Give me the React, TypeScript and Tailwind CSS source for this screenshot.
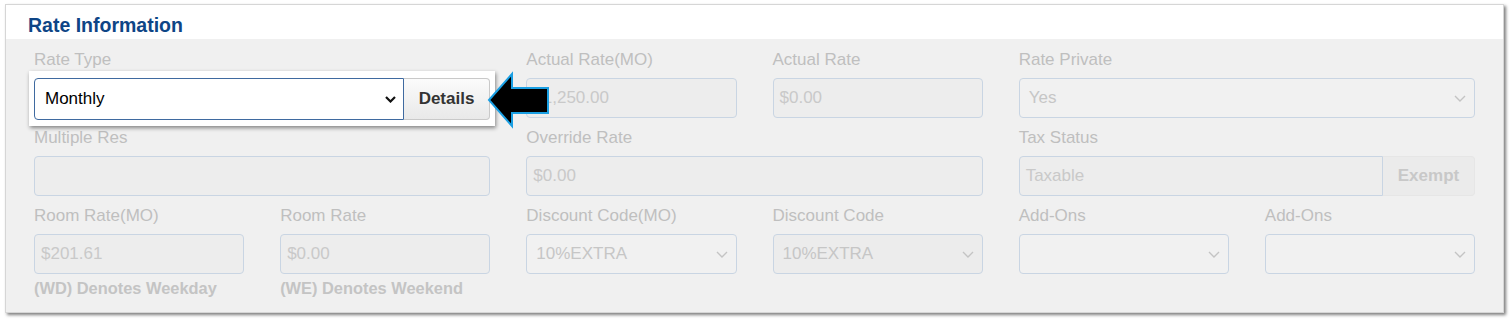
import React from "react"

const font = "font-['Liberation_Sans',Arial,Helvetica,sans-serif]"

function Chevron({ dark = false }: { dark?: boolean }) {
  return dark ? (
    <svg width="11" height="7" viewBox="0 0 11 7" className="shrink-0">
      <polyline points="1,1 5.5,5.5 10,1" fill="none" stroke="#111" strokeWidth="2.2" />
    </svg>
  ) : (
    <svg width="12" height="7" viewBox="0 0 12 7" className="shrink-0">
      <polyline points="1,1 6,6 11,1" fill="none" stroke="#c4c4c4" strokeWidth="1.4" />
    </svg>
  )
}

function Label({ children }: { children: React.ReactNode }) {
  return <div className="text-[17px] leading-[19px] text-[#bfbfbf] mb-[9px] whitespace-nowrap">{children}</div>
}

function TextBox({ value = "", className = "" }: { value?: string; className?: string }) {
  return (
    <div
      className={
        "h-[40px] border border-[#c9d5e3] bg-[#ededed] px-[6px] flex items-center text-[17px] text-[#c9c9c9] " +
        (className || "rounded-[4px]")
      }
    >
      {value}
    </div>
  )
}

function SelectBox({ value = "", darker = false }: { value?: string; darker?: boolean }) {
  return (
    <div
      className={
        "h-[40px] border border-[#c9d5e3] rounded-[4px] pl-[9px] pr-[8px] flex items-center justify-between text-[17px] text-[#c6c6c6] " +
        (darker ? "bg-[#ececec]" : "bg-[#f1f1f1]")
      }
    >
      <span>{value}</span>
      <Chevron />
    </div>
  )
}

function Field({
  label,
  span = false,
  help,
  children,
}: {
  label: string
  span?: boolean
  help?: string
  children: React.ReactNode
}) {
  return (
    <div className={span ? "col-span-2" : ""}>
      <Label>{label}</Label>
      {children}
      {help && <div className="mt-[5px] text-[16.4px] leading-[18px] font-bold text-[#c4c4c4] whitespace-nowrap">{help}</div>}
    </div>
  )
}

export default function App() {
  return (
    <div className={"min-h-screen bg-white pt-[4px] pl-[5px] " + font}>
      <div className="w-[1499px] border border-[#d6d6d6] shadow-[2px_2px_3px_rgba(0,0,0,0.5)]">
        <div className="h-[34px] bg-white pt-[9px] pl-[22px]">
          <h2 className="text-[19.5px] leading-[22px] font-bold text-[#0e4586]">Rate Information</h2>
        </div>

        <div className="bg-[#f0f0f0] pt-[11px] pb-[15px] px-[28px] grid grid-cols-6 gap-x-[36px] gap-y-[10px]">
          {/* Rate Type, highlighted */}
          <div className="col-span-2 relative">
            <Label>Rate Type</Label>
            <TextBox />
            <div className="absolute z-10 left-[-5px] top-[21px] w-[466px] h-[55px] bg-white shadow-[1px_2px_4px_rgba(0,0,0,0.45)]">
              <div className="flex ml-[5px] mt-[7px] h-[42px]">
                <div className="w-[370px] border border-[#3f6aa0] rounded-l-[4px] bg-white pl-[10px] pr-[7px] flex items-center justify-between text-[17px] text-black">
                  <span>Monthly</span>
                  <Chevron dark />
                </div>
                <div className="w-[86px] border border-l-0 border-[#c9c9c9] rounded-r-[4px] bg-gradient-to-b from-[#fbfbfb] to-[#e9e9e9] flex items-center justify-center text-[17px] font-bold text-[#333]">
                  Details
                </div>
              </div>
              <svg
                width="64"
                height="58"
                viewBox="0 0 64 58"
                className="absolute left-[458px] top-0"
              >
                <polygon
                  points="2,29 25,3 25,17 61,17 61,42 25,42 25,55"
                  fill="#000"
                  stroke="#1a9fe3"
                  strokeWidth="2"
                  strokeLinejoin="miter"
                />
              </svg>
            </div>
          </div>
          <Field label="Actual Rate(MO)">
            <TextBox value="$1,250.00" />
          </Field>
          <Field label="Actual Rate">
            <TextBox value="$0.00" />
          </Field>
          <Field label="Rate Private" span>
            <SelectBox value="Yes" />
          </Field>

          <Field label="Multiple Res" span>
            <TextBox />
          </Field>
          <Field label="Override Rate" span>
            <TextBox value="$0.00" />
          </Field>
          <Field label="Tax Status" span>
            <div className="flex">
              <TextBox value="Taxable" className="flex-1 rounded-l-[4px]" />
              <div className="w-[92px] h-[40px] border border-l-0 border-[#e6e6e6] rounded-r-[4px] bg-[#ebebeb] flex items-center justify-center text-[17px] font-bold text-[#c8c8c8]">
                Exempt
              </div>
            </div>
          </Field>

          <Field label="Room Rate(MO)" help="(WD) Denotes Weekday">
            <TextBox value="$201.61" />
          </Field>
          <Field label="Room Rate" help="(WE) Denotes Weekend">
            <TextBox value="$0.00" />
          </Field>
          <Field label="Discount Code(MO)">
            <SelectBox value="10%EXTRA" />
          </Field>
          <Field label="Discount Code">
            <SelectBox value="10%EXTRA" darker />
          </Field>
          <Field label="Add-Ons">
            <SelectBox />
          </Field>
          <Field label="Add-Ons">
            <SelectBox />
          </Field>
        </div>
      </div>
    </div>
  )
}
